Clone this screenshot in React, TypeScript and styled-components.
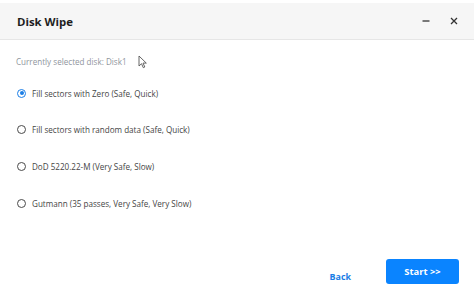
import React, { useState } from "react";
import styled, { createGlobalStyle } from "styled-components";

const GlobalStyle = createGlobalStyle`
  html, body {
    margin: 0;
    padding: 0;
    background: #ffffff;
  }
  body {
    font-family: "Open Sans", "Noto Sans", "Liberation Sans", sans-serif;
  }
`;

const options = [
  "Fill sectors with Zero (Safe, Quick)",
  "Fill sectors with random data (Safe, Quick)",
  "DoD 5220.22-M (Very Safe, Slow)",
  "Gutmann (35 passes, Very Safe, Very Slow)",
];

const Window = styled.div`
  width: 474px;
  height: 299px;
  display: flex;
  flex-direction: column;
  background: #fff;
  padding-top: 3px;
  box-sizing: border-box;
`;

const TitleBar = styled.div`
  height: 36px;
  background: #f6f6f6;
  border-bottom: 1px solid #e6e6e6;
  display: flex;
  align-items: center;
  padding: 0 7px 0 17px;
  gap: 2px;
`;

const Title = styled.h1`
  flex: 1;
  margin: 0;
  font-size: 11.4px;
  font-weight: 700;
  color: #1e1e1e;
`;

const WinButton = styled.button`
  width: 26px;
  height: 24px;
  border: none;
  background: transparent;
  display: flex;
  align-items: center;
  justify-content: center;
  padding: 0;
  color: #333;
`;

const Body = styled.div`
  flex: 1;
  padding: 14px 16px 0 16px;
  display: flex;
  flex-direction: column;
`;

const Info = styled.div`
  display: flex;
  align-items: center;
  height: 14px;
  font-size: 8.1px;
  color: #8f959d;
`;

const Cursor = styled.svg`
  margin-left: 11px;
  margin-top: 2px;
`;

const RadioList = styled.div`
  display: flex;
  flex-direction: column;
  gap: 22.7px;
  margin-top: 18px;
`;

const RadioRow = styled.label`
  display: flex;
  align-items: center;
  height: 14px;
  font-size: 8.1px;
  color: #454545;
  cursor: pointer;
`;

const Dot = styled.span<{ checked: boolean }>`
  width: 7px;
  height: 7px;
  border-radius: 50%;
  border: 1.2px solid ${(p) => (p.checked ? "#1b7ee6" : "#4a4a4a")};
  display: flex;
  align-items: center;
  justify-content: center;
  margin-right: 6px;
  margin-left: 1px;
  &::after {
    content: "";
    width: 4px;
    height: 4px;
    border-radius: 50%;
    background: ${(p) => (p.checked ? "#1b7ee6" : "transparent")};
  }
`;

const Footer = styled.div`
  display: flex;
  justify-content: flex-end;
  align-items: center;
  gap: 33px;
  padding: 0 15px 12px 0;
`;

const LinkButton = styled.button`
  border: none;
  background: transparent;
  color: #1b7ee6;
  font-family: inherit;
  font-weight: 700;
  font-size: 8.9px;
  padding: 4px 2px;
  margin-top: 10px;
`;

const PrimaryButton = styled.button`
  width: 73px;
  height: 25px;
  border: none;
  border-radius: 3px;
  background: #0a84ff;
  color: #fff;
  font-family: inherit;
  font-weight: 700;
  font-size: 9.4px;
`;

export default function App() {
  const [selected, setSelected] = useState(0);
  return (
    <>
      <GlobalStyle />
      <Window>
        <TitleBar>
          <Title>Disk Wipe</Title>
          <WinButton aria-label="minimize">
            <svg width="10" height="10" viewBox="0 0 10 10">
              <path d="M1.5 5h7" stroke="#333" strokeWidth="1.3" />
            </svg>
          </WinButton>
          <WinButton aria-label="close">
            <svg width="10" height="10" viewBox="0 0 10 10">
              <path d="M2 2l6 6M8 2l-6 6" stroke="#333" strokeWidth="1.3" />
            </svg>
          </WinButton>
        </TitleBar>
        <Body>
          <Info>
            Currently selected disk: Disk1
            <Cursor width="10" height="14" viewBox="0 0 10 14">
              <path
                d="M1 1v10l2.5-2.3 1.8 4 1.5-.7-1.8-3.9H8.3z"
                fill="#fff"
                stroke="#555"
                strokeWidth="0.9"
                strokeLinejoin="round"
              />
            </Cursor>
          </Info>
          <RadioList>
            {options.map((o, i) => (
              <RadioRow key={o} onClick={() => setSelected(i)}>
                <Dot checked={selected === i} />
                {o}
              </RadioRow>
            ))}
          </RadioList>
        </Body>
        <Footer>
          <LinkButton>Back</LinkButton>
          <PrimaryButton>Start &gt;&gt;</PrimaryButton>
        </Footer>
      </Window>
    </>
  );
}
